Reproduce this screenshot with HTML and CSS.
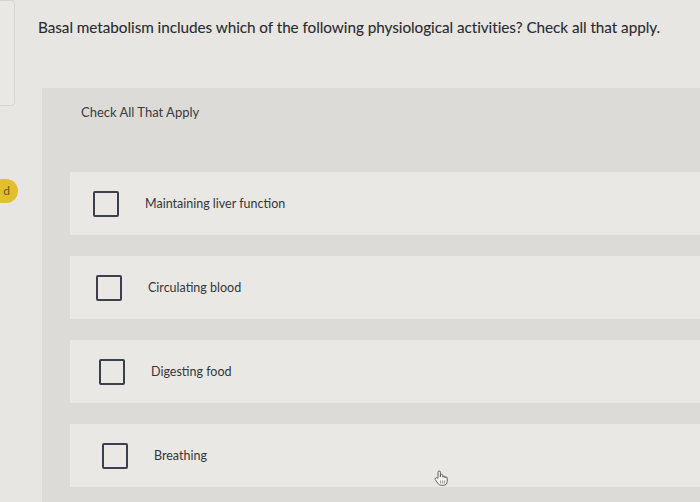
FILE: index.html
```html
<!DOCTYPE html>
<html>
<head>
<meta charset="utf-8">
<link rel="stylesheet" href="styles.css">
</head>
<body>
<div class="page">
  <aside class="side">
    <div class="side-card"></div>
    <div class="badge">d</div>
  </aside>
  <main class="main">
    <h1 class="question">Basal metabolism includes which of the following physiological activities? Check all that apply.</h1>
    <section class="panel">
      <div class="panel-head">Check All That Apply</div>
      <ul class="options">
        <li class="option o1"><span class="box"></span><span class="label">Maintaining liver function</span></li>
        <li class="option o2"><span class="box"></span><span class="label">Circulating blood</span></li>
        <li class="option o3"><span class="box"></span><span class="label">Digesting food</span></li>
        <li class="option o4"><span class="box"></span><span class="label">Breathing</span></li>
      </ul>
    </section>
  </main>
  <svg class="cursor" width="14" height="16" viewBox="0 0 14 16">
    <path d="M4 8 V2.2 a1.2 1.2 0 0 1 2.4 0 V7 V5.6 a1.2 1.2 0 0 1 2.4 0 V7.2 a1.1 1.1 0 0 1 2.2 0 V8 a1.1 1.1 0 0 1 2.2 0 V11.5 c0 2.2 -1.5 3.8 -3.8 3.8 H7.2 c-1.4 0 -2.4 -0.7 -3.2 -1.8 L1.2 9.6 a1.2 1.2 0 0 1 1.9 -1.4 Z" fill="#f4f3ef" stroke="#555" stroke-width="0.9" stroke-linejoin="round"/>
    <path d="M6.6 10.5 v3 M8.6 10.5 v3 M10.6 10.5 v3" stroke="#777" stroke-width="0.7"/>
  </svg>
</div>
</body>
</html>
```
FILE: styles.css
```css
* { box-sizing: border-box; }
html, body { margin: 0; padding: 0; }
body {
  background: #e7e6e2;
  font-family: "Lato", "Open Sans", sans-serif;
  color: #2f3035;
  width: 700px;
  height: 502px;
  overflow: hidden;
}
.page {
  position: relative;
  display: flex;
  height: 502px;
}
.side {
  position: relative;
  width: 16px;
  flex: none;
}
.side-card {
  width: 15px;
  height: 106px;
  border: 1px solid #d6d5d1;
  border-left: none;
  border-radius: 0 4px 4px 0;
  background: #e9e8e4;
}
.badge {
  position: absolute;
  left: -9px;
  top: 179px;
  width: 27px;
  height: 24px;
  border-radius: 12px;
  background: #e2bf2c;
  color: #6d5a10;
  font-size: 12px;
  line-height: 24px;
  text-align: right;
  padding-right: 8px;
}
.main {
  flex: 1;
  padding-left: 22px;
  min-width: 0;
}
.question {
  margin: 16px 0 0 0;
  font-size: 15.3px;
  font-weight: 400;
  letter-spacing: -0.05px;
  white-space: nowrap;
  color: #2a2b31;
  line-height: 22px;
  -webkit-text-stroke: 0.1px #2a2b31;
}
.panel {
  margin: 50px 0 0 4px;
  background: #dcdbd7;
  height: 420px;
}
.panel-head {
  height: 56px;
  padding: 15px 0 0 39px;
  font-size: 13px;
  color: #3a3b40;
  line-height: 18px;
}
.options {
  list-style: none;
  margin: 0;
  padding: 28px 0 0 28px;
  display: flex;
  flex-direction: column;
  gap: 21px;
}
.option {
  height: 63px;
  background: #e9e8e4;
  display: flex;
  align-items: center;
  font-size: 12.5px;
  color: #35363b;
}
.box {
  width: 26px;
  height: 26px;
  border: 2px solid #3b3e4c;
  border-radius: 2px;
  flex: none;
}
.label { margin-left: 26px; }
.o1 { padding-left: 23px; }
.o2 { padding-left: 26px; }
.o3 { padding-left: 29px; }
.o4 { padding-left: 32px; }
.cursor {
  position: absolute;
  left: 434px;
  top: 470px;
}
```
